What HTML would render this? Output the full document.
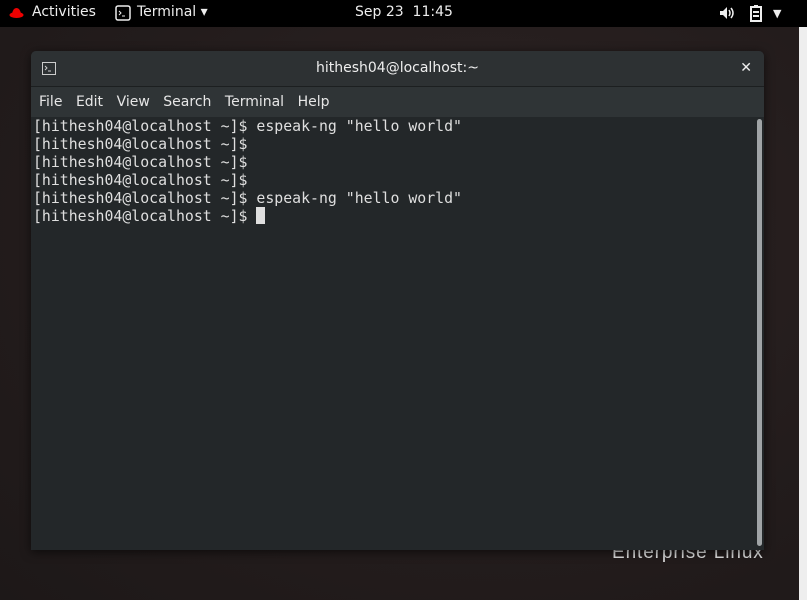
<!DOCTYPE html>
<html><head><style>
body{margin:0;width:807px;height:600px;overflow:hidden;background:radial-gradient(ellipse at 60% 40%,#2e2424 0%,#231c1c 60%,#1d1818 100%);font-family:"DejaVu Sans","Liberation Sans",sans-serif;position:relative}
#top{position:absolute;left:0;top:0;width:807px;height:27px;background:#000;color:#eee;font-size:14px}
#top span{position:absolute;top:4px}
#rs{position:absolute;right:0;top:27px;width:8px;height:573px;background:#eeeeee}
#win{position:absolute;left:31px;top:51px;width:733px;height:499px;background:#232729;box-shadow:0 2px 10px rgba(0,0,0,.6);border-radius:5px 5px 0 0;overflow:hidden}
#tb{height:35px;background:#2d3133;color:#eee;font-size:14px;text-align:center;line-height:35px;border-bottom:1px solid #1c1f20}
#mb{height:30px;background:#2f3436;color:#e6e6e6;font-size:14px;line-height:30px;padding-left:8px}
#mb span{margin-right:13.5px}
#term{position:absolute;left:2px;top:66px;font-family:"DejaVu Sans Mono",monospace;font-size:14.85px;line-height:18px;color:#dfdfdf;white-space:pre}
#sb{position:absolute;right:2px;top:68px;width:5px;height:427px;background:#a0a4a6;border-radius:3px}
#cur{display:inline-block;width:9px;height:17px;background:#dfdfdf;vertical-align:-3px}
#el{position:absolute;left:612px;top:542px;color:#ddd;font-size:19px;letter-spacing:0.9px;font-family:"Liberation Sans",sans-serif}
</style></head><body>
<div id="el">Enterprise Linux</div>
<div id="top">
<svg style="position:absolute;left:9px;top:7px" width="15" height="12"><ellipse cx="7.5" cy="8" rx="7" ry="3" fill="#e00"/><path d="M3 7 Q4 1 7.5 1 Q11 1 12 7Z" fill="#e00"/></svg>
<span style="left:32px">Activities</span>
<svg style="position:absolute;left:115px;top:5px" width="16" height="16"><rect x="1" y="1" width="14" height="14" rx="2" fill="none" stroke="#eee" stroke-width="1.5"/><path d="M4 6l2 2-2 2M7 11h3" stroke="#eee" fill="none"/></svg>
<span style="left:137px">Terminal ▾</span>
<span style="left:355px">Sep 23&nbsp; 11:45</span>
<svg style="position:absolute;left:719px;top:6px" width="16" height="14"><path d="M1 5h3l4-4v12l-4-4H1z" fill="#eee"/><path d="M10 4q2 3 0 6M12 2q4 5 0 10" stroke="#eee" stroke-width="1.5" fill="none"/></svg>
<svg style="position:absolute;left:750px;top:5px" width="12" height="17"><rect x="4" y="0" width="4" height="2" fill="#eee"/><rect x="1" y="2" width="10" height="14" fill="none" stroke="#eee" stroke-width="2"/><rect x="3" y="6" width="6" height="2" fill="#eee"/><rect x="3" y="10" width="6" height="2" fill="#eee"/></svg>
<span style="left:773px;font-size:11px;top:7px">▼</span>
</div>
<div id="rs"></div>
<div id="win">
<div id="tb">hithesh04@localhost:~
<svg style="position:absolute;left:11px;top:11px" width="14" height="13"><rect x="0.5" y="0.5" width="13" height="12" fill="none" stroke="#ccc"/><path d="M3 4l2 2-2 2M6 9h3" stroke="#ccc" fill="none"/></svg>
<span style="position:absolute;right:12px;top:0;font-size:14px">✕</span></div>
<div id="mb"><span>File</span><span>Edit</span><span>View</span><span>Search</span><span>Terminal</span><span>Help</span></div>
<div id="term">[hithesh04@localhost ~]$ espeak-ng "hello world"
[hithesh04@localhost ~]$
[hithesh04@localhost ~]$
[hithesh04@localhost ~]$
[hithesh04@localhost ~]$ espeak-ng "hello world"
[hithesh04@localhost ~]$ <span id="cur"></span></div>
<div id="sb"></div>
</div>
</body></html>
